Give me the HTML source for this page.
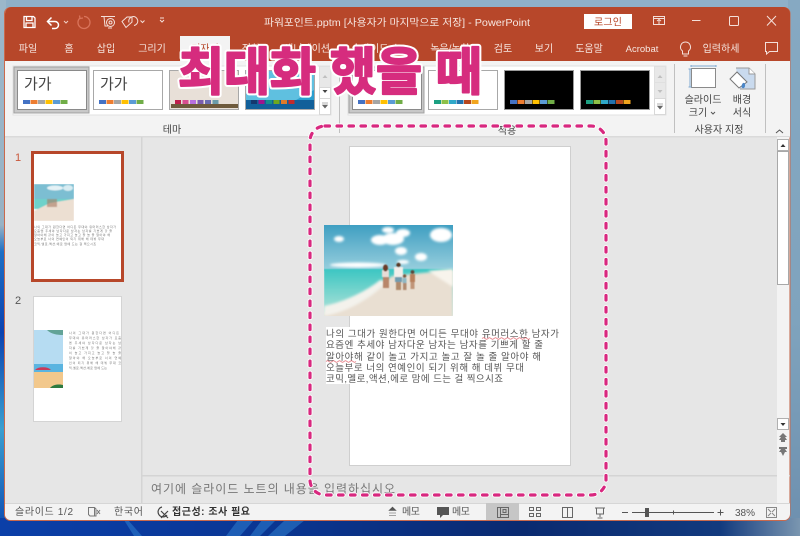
<!DOCTYPE html>
<html lang="ko"><head><meta charset="utf-8"><title>파워포인트.pptm</title>
<style>
html,body{margin:0;padding:0;width:800px;height:536px;overflow:hidden;background:#8fb0c8}
svg{display:block;position:absolute;left:0;top:0;filter:blur(.3px)}
text{font-family:"Liberation Sans","Noto Sans CJK KR",sans-serif;font-size:10px;fill:#444}
.t{fill:#f6e6e0;font-size:10px}
.c{text-anchor:middle}
.s{font-size:10px;fill:#555}
.tiny{font-size:3px;fill:#777}
.cap{font-size:51px;font-weight:bold;stroke-linejoin:round;font-family:'Noto Sans CJK KR','Liberation Sans',sans-serif}
</style></head><body>
<svg width="800" height="536" viewBox="0 0 800 536" xmlns="http://www.w3.org/2000/svg">
<defs>
<linearGradient id="bgL" x1="0" y1="0" x2="0" y2="1"><stop offset="0" stop-color="#9bb7ca"/><stop offset=".42" stop-color="#98b2c4"/><stop offset=".47" stop-color="#1f6fc4"/><stop offset=".62" stop-color="#0d43b0"/><stop offset=".8" stop-color="#3b9fd0"/><stop offset="1" stop-color="#0b46b0"/></linearGradient>
<linearGradient id="bgR" x1="0" y1="0" x2="0" y2="1"><stop offset="0" stop-color="#86a9c2"/><stop offset=".6" stop-color="#7fa3bd"/><stop offset="1" stop-color="#6d8fae"/></linearGradient>
<linearGradient id="bgB" x1="0" y1="0" x2="1" y2="0"><stop offset="0" stop-color="#0b3fa8"/><stop offset=".3" stop-color="#0a3796"/><stop offset=".65" stop-color="#0a2a70"/><stop offset=".9" stop-color="#123a7e"/><stop offset="1" stop-color="#7a96b0"/></linearGradient>
<linearGradient id="sky" x1="0" y1="0" x2="0" y2="1"><stop offset="0" stop-color="#3f9fc2"/><stop offset="1" stop-color="#9ad0de"/></linearGradient>
<linearGradient id="sea" x1="0" y1="0" x2="0" y2="1"><stop offset="0" stop-color="#3cc6c2"/><stop offset="1" stop-color="#b6e4da"/></linearGradient>
<filter id="b1" x="-20%" y="-20%" width="140%" height="140%"><feGaussianBlur stdDeviation="1.300"/></filter>
<filter id="b2" x="-20%" y="-20%" width="140%" height="140%"><feGaussianBlur stdDeviation=".5"/></filter>
<clipPath id="pc"><rect x="324" y="225" width="129" height="91"/></clipPath>
<clipPath id="pt"><rect x="34" y="184" width="40" height="37"/></clipPath>
<g id="sw1"><rect x="0" width="7" height="4" fill="#4472C4"/><rect x="7.500" width="7" height="4" fill="#ED7D31"/><rect x="15" width="7" height="4" fill="#A5A5A5"/><rect x="22.500" width="7" height="4" fill="#FFC000"/><rect x="30" width="7" height="4" fill="#5B9BD5"/><rect x="37.500" width="7" height="4" fill="#70AD47"/></g>
<g id="sw2"><rect x="0" width="7" height="4" fill="#1CA082"/><rect x="7.500" width="7" height="4" fill="#8DC048"/><rect x="15" width="7" height="4" fill="#2FA8C9"/><rect x="22.500" width="7" height="4" fill="#2272AE"/><rect x="30" width="7" height="4" fill="#B7471E"/><rect x="37.500" width="7" height="4" fill="#F2A51E"/></g>
</defs>

<!-- desktop -->
<rect width="800" height="536" fill="#8fb0c8"/>
<rect x="0" y="0" width="6" height="536" fill="url(#bgL)"/>
<rect x="788" y="0" width="12" height="536" fill="url(#bgR)"/>
<rect x="0" y="518" width="800" height="18" fill="url(#bgB)"/>
<path d="M128 520L142 536H134L124 520ZM238 520L226 536H240L254 520ZM262 520L250 536H260L276 520ZM285 520L268 536H285L305 520Z" fill="#2f7fd0" opacity=".55"/>

<!-- window -->
<rect x="4.500" y="7.500" width="785.500" height="513" rx="6" fill="#E6E6E6" stroke="#C9694C"/>
<path d="M5 61V14a7 7 0 0 1 7-7H783a7 7 0 0 1 7 7V61Z" fill="#B7472A"/>
<rect x="5" y="61" width="785" height="75" fill="#F3F3F3"/>
<rect x="5" y="136" width="785" height="1.500" fill="#DADADA"/>
<rect x="141" y="137" width="1.500" height="366" fill="#D4D4D4"/>
<rect x="142" y="475" width="648" height="1.500" fill="#D4D4D4"/>
<path d="M5 503H790V514a6 6 0 0 1-6 6H11a6 6 0 0 1-6-6Z" fill="#F3F3F3"/>
<rect x="5" y="503" width="785" height="1" fill="#D6D6D6"/>

<!-- quick access -->
<g fill="none" stroke="#fff" stroke-width="1.300">
<path d="M24 16.500H33.500L35 18V27.500H24Z"/><path d="M26.500 17V20.500H32V17M26 27.500V23H33V27.500"/>
<path d="M48 21.500H55a3.500 3.500 0 0 1 0 7H52" stroke-width="1.500"/><path d="M51.500 17.500L47.500 21.500L51.500 25.500" stroke-width="1.500"/>
</g>
<path d="M64 21l2 2 2-2" fill="none" stroke="#f0d0c6"/>
<path d="M84 16.500a6 6 0 1 1-4 1.500M79.500 15.500L80 18.500L83 18" fill="none" stroke="#D9735A" stroke-width="1.300"/>
<g fill="none" stroke="#f4e0da" stroke-width="1">
<path d="M101 16.500H115M104 16.500L105 26H108M108 28H112"/><circle cx="110.500" cy="22.500" r="4"/><circle cx="110.500" cy="22.500" r="1.500"/>
<path d="M122 21.500L127 17H132V22L126 27.500ZM129 22.500a4.500 4.500 0 1 1 5 3"/>
<path d="M140.500 20.500l2 2 2-2M160 20l2 2 2-2M160 18H164"/>
</g>

<!-- title -->
<text x="264" y="26" class="t" textLength="266" lengthAdjust="spacingAndGlyphs" style="font-size:10px">파워포인트.pptm [사용자가 마지막으로 저장]  -  PowerPoint</text>
<rect x="584" y="14" width="48" height="15" fill="#fff"/>
<text x="608" y="25.500" class="c" style="fill:#B7472A;font-size:10px" textLength="28">로그인</text>
<g fill="none" stroke="#f4e0da" stroke-width="1">
<rect x="653.500" y="16.500" width="11" height="8"/><path d="M653.500 18.500H664.500M659 24V19.500M657 21L659 19.500L661 21"/>
<path d="M692 20.500H700.500"/>
<rect x="729.500" y="16.500" width="9" height="9" rx="1"/>
<path d="M767 16L776 25.500M776 16L767 25.500"/>
</g>

<!-- tabs -->
<rect x="180" y="36" width="50" height="26" fill="#F3F3F3"/>
<text x="28" y="52" class="t c">파일</text>
<text x="69" y="52" class="t c">홈</text>
<text x="106" y="52" class="t c">삽입</text>
<text x="152" y="52" class="t c">그리기</text>
<text x="205" y="52" class="c" style="fill:#B7472A">디자인</text>
<text x="251" y="52" class="t c">전환</text>
<text x="307" y="52" class="t c">애니메이션</text>
<text x="376" y="52" class="t c">슬라이드 쇼</text>
<text x="450" y="52" class="t c">녹음/녹화</text>
<text x="503" y="52" class="t c">검토</text>
<text x="544" y="52" class="t c">보기</text>
<text x="589" y="52" class="t c">도움말</text>
<text x="642" y="52" class="t c" style="font-size:9.500px">Acrobat</text>
<text x="721" y="52" class="t c">입력하세</text>
<path d="M685.500 42a5 5 0 0 1 3 9v3h-6v-3a5 5 0 0 1 3-9ZM683.500 56H687.500" fill="none" stroke="#f4e0da"/>
<path d="M765.500 42.500H777.500V51.500H769.500L766.500 54V51.500H765.500Z" fill="none" stroke="#f4e0da"/>

<!-- theme gallery -->
<rect x="13" y="66" width="318" height="49" fill="#fff" stroke="#E2E2E2"/>
<rect x="14" y="67" width="75" height="46" fill="#C8C8C8" stroke="#A0A0A0"/>
<rect x="17.500" y="70.500" width="69" height="39" fill="#fff" stroke="#8a8a8a"/>
<text x="24" y="89" style="font-size:15px;fill:#444">가가</text>
<use href="#sw1" x="23" y="100"/>
<rect x="93.500" y="70.500" width="69" height="39" fill="#fff" stroke="#A8A8A8"/>
<text x="100" y="89" style="font-size:15px;fill:#444">가가</text>
<use href="#sw1" x="99" y="100"/>
<rect x="169.500" y="70.500" width="69" height="39" fill="#E8E0D8" stroke="#A8A8A8"/>
<rect x="171" y="104" width="67" height="4" fill="#6e5a3c"/>
<g transform="translate(175,100)"><rect width="6" height="4" fill="#BE1E4B"/><rect x="7.500" width="6" height="4" fill="#D84E90"/><rect x="15" width="6" height="4" fill="#B86FE0"/><rect x="22.500" width="6" height="4" fill="#7A5CAE"/><rect x="30" width="6" height="4" fill="#6A6CB0"/><rect x="37.500" width="6" height="4" fill="#6B9CAA"/></g>
<rect x="245.500" y="70.500" width="69" height="39" fill="#2A9FD0" stroke="#A8A8A8"/>
<path d="M246 71H314V90L280 109H246Z" fill="#5FC0E0"/>
<path d="M246 100H314V109H246Z" fill="#12609A"/>
<g transform="translate(251,100)"><rect width="6" height="4" fill="#14386E"/><rect x="7.500" width="6" height="4" fill="#A0148C"/><rect x="15" width="6" height="4" fill="#13908C"/><rect x="22.500" width="6" height="4" fill="#6FA81E"/><rect x="30" width="6" height="4" fill="#E07A2A"/><rect x="37.500" width="6" height="4" fill="#C42B2B"/></g>
<rect x="319.500" y="66.500" width="11" height="21" fill="#E8E8E8" stroke="#E0E0E0"/>
<rect x="319.500" y="87.500" width="11" height="11" fill="#fff" stroke="#D8D8D8"/>
<rect x="319.500" y="98.500" width="11" height="16" fill="#fff" stroke="#D8D8D8"/>
<path d="M322.500 78L325 75L327.500 78Z" fill="#C0C0C0"/><path d="M322.500 90L325 93L327.500 90Z" fill="#444"/><path d="M322 103H328M322.500 105L325 108L327.500 105Z" fill="#666" stroke="#666" stroke-width=".6"/>
<rect x="339" y="64" width="1" height="69" fill="#C0C0C0"/>

<!-- variants -->
<rect x="348" y="66" width="318" height="49" fill="#fff" stroke="#E2E2E2"/>
<rect x="349" y="67" width="75" height="46" fill="#C8C8C8" stroke="#A0A0A0"/>
<rect x="352.500" y="70.500" width="69" height="39" fill="#fff" stroke="#8a8a8a"/>
<use href="#sw1" x="358" y="100"/>
<rect x="428.500" y="70.500" width="69" height="39" fill="#fff" stroke="#A8A8A8"/>
<use href="#sw2" x="434" y="100"/>
<rect x="504.500" y="70.500" width="69" height="39" fill="#000" stroke="#9A9A9A" stroke-width="1"/>
<use href="#sw1" x="510" y="100"/>
<rect x="580.500" y="70.500" width="69" height="39" fill="#000" stroke="#9A9A9A"/>
<use href="#sw2" x="586" y="100"/>
<rect x="654.500" y="66.500" width="11" height="21" fill="#E8E8E8" stroke="#E0E0E0"/>
<rect x="654.500" y="82.500" width="11" height="16" fill="#E8E8E8" stroke="#E0E0E0"/>
<rect x="654.500" y="98.500" width="11" height="16" fill="#fff" stroke="#D8D8D8"/>
<path d="M657.500 78L660 75L662.500 78ZM657.500 90L660 93L662.500 90Z" fill="#C0C0C0"/><path d="M657 104H663M657.500 106L660 109L662.500 106Z" fill="#666" stroke="#666" stroke-width=".6"/>
<rect x="674" y="64" width="1" height="69" fill="#C0C0C0"/>
<rect x="765" y="64" width="1" height="69" fill="#C0C0C0"/>

<!-- customize -->
<rect x="691.500" y="68.500" width="24" height="19" fill="#fff" stroke="#8a8a8a"/>
<path d="M691 66H716M691 65V67M716 65V67M690 69V87M688.500 69H691.500M688.500 87H691.500" stroke="#7FA8D0" fill="none"/>
<path d="M736 68H749L755 74V89H740" fill="#C9DAEE" stroke="#9a9a9a"/>
<path d="M749 68V74H755" fill="#fff" stroke="#9a9a9a"/>
<path d="M737 72L747 82L739 88L730 79Z" fill="#fff" stroke="#777"/>
<path d="M743 83c2-1 3 3 1 5-3 1-3-3-1-5Z" fill="#4A86C8"/>
<text x="703" y="103" class="c">슬라이드</text>
<text x="698" y="116" class="c">크기</text>
<path d="M711 112l2 2 2-2" fill="none" stroke="#555"/>
<text x="742" y="103" class="c">배경</text>
<text x="742" y="116" class="c">서식</text>
<text x="719" y="133" class="c">사용자 지정</text>
<text x="172" y="133" class="c">테마</text>
<text x="507" y="134" class="c">적용</text>
<path d="M776 133l3.500-3 3.500 3" fill="none" stroke="#555"/>

<!-- thumbnails -->
<text x="15" y="161" style="font-size:11px;fill:#C9573A">1</text>
<rect x="32.500" y="152.500" width="90" height="128" fill="#fff" stroke="#B7472A" stroke-width="3"/>
<g clip-path="url(#pt)"><g filter="url(#b2)">
<rect x="34" y="184" width="40" height="16" fill="#7cbed2"/>
<ellipse cx="55" cy="188" rx="8" ry="2.500" fill="#fff" opacity=".8"/>
<ellipse cx="68" cy="188" rx="5" ry="3" fill="#fff" opacity=".7"/>
<rect x="34" y="199" width="40" height="10" fill="#6ed2ca"/>
<path d="M34 221V211L50 203L74 199V221Z" fill="#ecdfd2"/>
<rect x="47" y="199" width="10" height="8" fill="#a87a60" opacity=".6"/>
</g></g>
<text x="34" y="228" class="tiny" textLength="82">나의 그대가 원한다면 어디든 무대야 유머러스한 남자가</text>
<text x="34" y="232" class="tiny" textLength="78">요즘엔 추세야 남자다운 남자는 남자를 기쁘게 할 줄</text>
<text x="34" y="236" class="tiny" textLength="76">알아야해 같이 놀고 가지고 놀고 잘 놀 줄 알아야 해</text>
<text x="34" y="240" class="tiny" textLength="70">오늘부로 너의 연예인이 되기 위해 해 데뷔 무대</text>
<text x="34" y="245" class="tiny" textLength="62">코믹,멜로,액션,에로 맘에 드는 걸 찍으시죠</text>
<text x="15" y="304" style="font-size:11px;fill:#555">2</text>
<rect x="33.500" y="296.500" width="88" height="125" fill="#fff" stroke="#D4D4D4"/>
<rect x="34" y="330" width="29" height="34" fill="#B6DCF2"/>
<rect x="34" y="364" width="29" height="8" fill="#5AB4E0"/>
<rect x="34" y="372" width="29" height="16" fill="#F2C88C"/>
<path d="M35 370a9 5 0 0 1 16 0Z" fill="#C83A5A"/>
<path d="M50 388c3-4 10-4 13-3v3Z" fill="#2E7A40"/>
<path d="M47 330h16v5c-6 0-12-1-16-5Z" fill="#3E8A70" opacity=".7"/>
<text x="69" y="334" class="tiny" textLength="50">나의 그대가 원한다면 어디든</text>
<text x="69" y="339" class="tiny" textLength="52">무대야 유머러스한 남자가 요즘</text>
<text x="69" y="344" class="tiny" textLength="52">엔 추세야 남자다운 남자는 남</text>
<text x="69" y="349" class="tiny" textLength="52">자를 기쁘게 할 줄 알아야해 같</text>
<text x="69" y="354" class="tiny" textLength="52">이 놀고 가지고 놀고 잘 놀 줄</text>
<text x="69" y="359" class="tiny" textLength="52">알아야 해 오늘부로 너의 연예</text>
<text x="69" y="364" class="tiny" textLength="52">인이 되기 위해 해 데뷔 무대 코</text>
<text x="69" y="369" class="tiny" textLength="38">믹,멜로,액션,에로 맘에 드는</text>

<!-- main slide -->
<rect x="349.500" y="146.500" width="221" height="319" fill="#fff" stroke="#CFCFCF"/>
<g clip-path="url(#pc)">
<rect x="324" y="225" width="129" height="46" fill="url(#sky)"/>
<g fill="#fff" filter="url(#b1)">
<ellipse cx="380" cy="240" rx="9" ry="5"/><ellipse cx="393" cy="239" rx="11" ry="6"/><ellipse cx="403" cy="233" rx="7" ry="4"/><ellipse cx="388" cy="230" rx="6" ry="3"/>
<ellipse cx="441" cy="235" rx="11" ry="7"/><ellipse cx="339" cy="239" rx="5" ry="3"/><ellipse cx="401" cy="251" rx="6" ry="4"/><ellipse cx="421" cy="257" rx="6" ry="4"/><ellipse cx="403" cy="262" rx="6" ry="2"/>
<ellipse cx="358" cy="265" rx="28" ry="2.500"/>
</g>
<rect x="324" y="269" width="129" height="47" fill="url(#sea)" filter="url(#b2)"/>
<path d="M324 318V312C350 310 375 290 392 276L453 270V318Z" fill="#E9DFD2" filter="url(#b1)"/>
<path d="M324 306C345 302 368 290 380 280L388 281C375 295 350 312 324 316Z" fill="#F4F2EC" filter="url(#b1)"/>
<path d="M428 271L453 269V287Z" fill="#F8F4EC" filter="url(#b1)"/>
<g filter="url(#b2)">
<rect x="382" y="270" width="7" height="7" fill="#e8dcd6"/><rect x="383" y="277" width="6" height="11" fill="#b8866a"/><ellipse cx="385.500" cy="268" rx="2.500" ry="3.500" fill="#6b3a28"/>
<rect x="394" y="267" width="9" height="10" fill="#f2eeea"/><rect x="395" y="277" width="7" height="5" fill="#6f9cb0"/><rect x="396" y="282" width="5" height="8" fill="#b08a6c"/><circle cx="398.500" cy="265" r="2.200" fill="#5a3a28"/>
<rect x="402.500" y="278" width="4" height="5" fill="#8fb8c4"/><rect x="403" y="283" width="3.500" height="7" fill="#b08a70"/><circle cx="404.500" cy="276" r="1.800" fill="#7a5a40"/>
<rect x="410" y="274" width="5" height="8" fill="#b8805c"/><rect x="410.500" y="282" width="4" height="7" fill="#c09478"/><circle cx="412.500" cy="272" r="1.900" fill="#5a4a3a"/>
</g>
</g>
<rect x="326" y="327" width="234" height="57" fill="#fff"/>
<text x="326" y="337" style="font-size:9.500px;fill:#555" textLength="233">나의 그대가 원한다면 어디든 무대야 유머러스한 남자가</text>
<text x="326" y="348" style="font-size:9.500px;fill:#555" textLength="217">요즘엔 추세야 남자다운 남자는 남자를 기쁘게 할 줄</text>
<text x="326" y="360" style="font-size:9.500px;fill:#555" textLength="215">알아야해 같이 놀고 가지고 놀고 잘 놀 줄 알아야 해</text>
<text x="326" y="371" style="font-size:9.500px;fill:#555" textLength="198">오늘부로 너의 연예인이 되기 위해 해 데뷔 무대</text>
<text x="326" y="382" style="font-size:9.500px;fill:#555" textLength="177">코믹,멜로,액션,에로 맘에 드는 걸 찍으시죠</text>
<path d="M482 338.500q1.500-1.500 3 0t3 0 3 0 3 0 3 0 3 0 3 0 3 0 3 0 3 0 3 0 3 0 3 0 3 0 3 0 3 0 M326 361.500q1.500-1.500 3 0t3 0 3 0 3 0 3 0 3 0 3 0 3 0 3 0 3 0" fill="none" stroke="#E0606A" stroke-width=".7"/>

<!-- notes -->
<text x="151" y="493" style="font-size:12px;fill:#777" textLength="244">여기에 슬라이드 노트의 내용을 입력하십시오</text>

<!-- scrollbar -->
<rect x="777" y="137" width="12" height="366" fill="#F3F3F3"/>
<rect x="777.500" y="139.500" width="11" height="11" fill="#fff" stroke="#B0B0B0"/>
<path d="M780.500 147L783 144L785.500 147Z" fill="#333"/>
<rect x="777.500" y="151.500" width="11" height="133" fill="#fff" stroke="#A8A8A8"/>
<rect x="777.500" y="418.500" width="11" height="11" fill="#fff" stroke="#B0B0B0"/>
<path d="M780.500 423L783 426L785.500 423Z" fill="#333"/>
<path d="M783 433L779 437H781L779 440H781V442H785V440H787L785 437H787Z" fill="#777"/>
<path d="M779 447H787V449H785L787 452H785L783 456L781 452H779L781 449H779Z" fill="#777"/>

<!-- status -->
<text x="15" y="515" class="s" textLength="58">슬라이드 1/2</text>
<path d="M88.500 507.500H94.500L96 509V516H90L88.500 514.500ZM94.500 507.500V516" fill="none" stroke="#777"/>
<path d="M97 510L100 514M100 510L97 514" stroke="#777" fill="none"/>
<text x="114" y="515" class="s" textLength="29">한국어</text>
<path d="M162 507a5 5 0 1 0 5 8M161 511L168 518M168 511L161 518" fill="none" stroke="#444" stroke-width="1.200"/>
<text x="172" y="515" class="s" style="font-weight:bold;fill:#333" textLength="78">접근성: 조사 필요</text>
<path d="M389 515.500H396M389 513H396M389 510.500L392.500 507L396 510.500Z" fill="#555" stroke="#555" stroke-width=".6"/>
<text x="402" y="515" class="s" textLength="18">메모</text>
<path d="M437 507H449V515H443L440 518V515H437Z" fill="#555"/>
<text x="452" y="515" class="s" textLength="18">메모</text>
<rect x="486" y="503" width="33" height="17" fill="#C6C6C6"/>
<g fill="none" stroke="#666">
<rect x="497.500" y="507.500" width="11" height="10"/><path d="M500.500 507.500V517.500M500.500 514.500H508.500"/><rect x="503" y="509.500" width="3" height="3"/>
<rect x="529.500" y="507.500" width="4" height="3"/><rect x="536.500" y="507.500" width="4" height="3"/><rect x="529.500" y="513.500" width="4" height="3"/><rect x="536.500" y="513.500" width="4" height="3"/>
<path d="M562.500 507.500H567.500V517.500H562.500ZM567.500 507.500H572.500V517.500H567.500Z"/>
<path d="M595 508H605M596.500 508V514H603.500V508M600 514V517M597.500 518H602.500"/>
</g>
<path d="M622 512.500H628M632 512.500H714M673.500 510.500V514.500M717.500 512.500H723.500M720.500 509.500V515.500" stroke="#555" fill="none"/>
<rect x="645" y="508" width="4" height="9" fill="#555"/>
<text x="735" y="516" class="s" textLength="20">38%</text>
<rect x="766.500" y="507.500" width="10" height="10" fill="none" stroke="#888"/>
<path d="M768 509l3 3M775 509l-3 3M768 516l3-3M775 516l-3-3" stroke="#888" fill="none"/>

<!-- dashed overlay -->
<rect x="310" y="126" width="296" height="369" rx="15" fill="none" stroke="#fff" stroke-width="5" stroke-dasharray="4.500 7.500" stroke-linecap="round"/>
<rect x="310" y="126" width="296" height="369" rx="15" fill="none" stroke="#D8287F" stroke-width="3.200" stroke-dasharray="4.500 7.500" stroke-linecap="round"/>

<!-- caption -->
<text x="178" y="90" class="cap" textLength="304" lengthAdjust="spacingAndGlyphs" style="fill:#fff;stroke:#fff;stroke-width:6px">최대화 했을 때</text>
<text x="178" y="90" class="cap" textLength="304" lengthAdjust="spacingAndGlyphs" style="fill:#D62C7E;stroke:#D62C7E;stroke-width:2px">최대화 했을 때</text>
</svg>
</body></html>
